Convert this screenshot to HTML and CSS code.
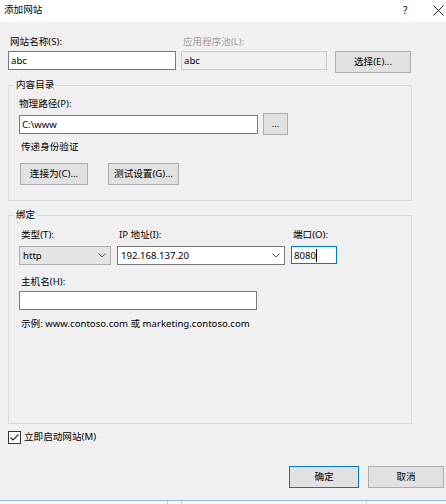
FILE: index.html
```html
<!DOCTYPE html>
<html lang="zh-CN">
<head>
<meta charset="utf-8">
<title>添加网站</title>
<link rel="stylesheet" href="styles.css">
</head>
<body>
<div class="dlg">
  <div class="titlebar">
    <span class="title">添加网站</span>
    <span class="help">?</span>
    <span class="close"><svg width="11" height="11" viewBox="0 0 11 11"><path d="M0.5 0.5 L10.5 10.5 M10.5 0.5 L0.5 10.5" stroke="#222" stroke-width="1" fill="none"/></svg></span>
  </div>
  <div class="content">
    <div class="row-top">
      <div class="field">
        <div class="lbl">网站名称(S):</div>
        <div class="input w-name">abc</div>
      </div>
      <div class="field">
        <div class="lbl dis">应用程序池(L):</div>
        <div class="input dis w-pool">abc</div>
      </div>
      <button class="btn btn-sel">选择(E)...</button>
    </div>

    <fieldset class="group g-content">
      <legend>内容目录</legend>
      <div class="lbl">物理路径(P):</div>
      <div class="row-path">
        <div class="input w-path">C:\www</div>
        <button class="btn btn-dots">...</button>
      </div>
      <div class="lbl auth">传递身份验证</div>
      <div class="row-auth">
        <button class="btn btn-conn">连接为(C)...</button>
        <button class="btn btn-test">测试设置(G)...</button>
      </div>
    </fieldset>

    <fieldset class="group g-bind">
      <legend>绑定</legend>
      <div class="row-bind">
        <div class="field">
          <div class="lbl">类型(T):</div>
          <div class="combo ro w-type"><span>http</span><svg class="chev" width="8" height="5" viewBox="0 0 8 5"><path d="M0.5 0.5 L4 4 L7.5 0.5" stroke="#555" fill="none"/></svg></div>
        </div>
        <div class="field">
          <div class="lbl">IP 地址(I):</div>
          <div class="combo w-ip"><span>192.168.137.20</span><svg class="chev" width="8" height="5" viewBox="0 0 8 5"><path d="M0.5 0.5 L4 4 L7.5 0.5" stroke="#555" fill="none"/></svg></div>
        </div>
        <div class="field">
          <div class="lbl">端口(O):</div>
          <div class="input focus w-port">8080<span class="caret"></span></div>
        </div>
      </div>
      <div class="lbl host">主机名(H):</div>
      <div class="input w-host"></div>
      <div class="lbl example">示例: www.contoso.com 或 marketing.contoso.com</div>
    </fieldset>

    <div class="check-row">
      <span class="checkbox"><svg width="13" height="13" viewBox="0 0 13 13"><rect x="0.5" y="0.5" width="12" height="12" fill="#fff" stroke="#333"/><path d="M2.5 6.5 L5 9 L10.5 3.5" stroke="#222" stroke-width="1.1" fill="none"/></svg></span>
      <span class="lbl">立即启动网站(M)</span>
    </div>

    <div class="row-actions">
      <button class="btn btn-ok">确定</button>
      <button class="btn btn-cancel">取消</button>
    </div>
  </div>
</div>
<div class="behind">
  <div class="cell c1"></div>
  <div class="cell c2"></div>
  <div class="cell c3"></div>
  <div class="cell c4"></div>
</div>
</body>
</html>
```

FILE: styles.css
```css
* { box-sizing: border-box; }

html, body {
  margin: 0;
  padding: 0;
  background: #f0f0f0;
  overflow: hidden;
}

body {
  width: 446px;
  height: 504px;
  font-family: "Noto Sans", "Noto Sans CJK SC", sans-serif;
  font-size: 9.6px;
  line-height: 16px;
  color: #000;
}

.dlg {
  height: 500px;
  background: #f0f0f0;
}

.titlebar {
  height: 22px;
  background: #fff;
  display: flex;
  align-items: center;
  padding-left: 4px;
}

.title { flex: 1; margin-top: -3px; }

.help {
  width: 30px;
  margin-top: -3px;
  font-size: 10px;
}

.close {
  display: flex;
  width: 13px;
  margin-top: -2px;
}

.content {
  padding: 12px 2px 0 8px;
}

.lbl { height: 16px; white-space: nowrap; }
.lbl.dis { color: #a0a0a0; }

.row-top {
  display: flex;
  gap: 5px;
  align-items: flex-start;
}

.field {
  display: flex;
  flex-direction: column;
  gap: 1px;
}

.lbl:first-child { padding-left: 2px; }

.input, .combo {
  height: 19px;
  background: #fff;
  border: 1px solid #7a7a7a;
  padding: 0 2px;
  line-height: 17px;
  white-space: nowrap;
}

.input.dis {
  background: #f0f0f0;
  border-color: #cccccc;
}

.w-name { width: 168px; }
.w-pool { width: 146px; }

.btn {
  font: inherit;
  line-height: 16px;
  color: #000;
  background: #e1e1e1;
  border: 1px solid #adadad;
  height: 22px;
  padding: 0;
  text-align: center;
  border-radius: 0;
  white-space: nowrap;
}

.btn-sel {
  width: 76px;
  margin-top: 17px;
  margin-left: 3px;
}

.group {
  margin: 0;
  width: 404px;
  border: 1px solid #dcdcdc;
  padding: 0 0 0 10px;
  min-width: 0;
}

.group legend {
  padding: 0 2px;
  margin-left: -5px;
  line-height: 16px;
}

.g-content {
  margin-top: 4px;
  padding-top: 3px;
  padding-bottom: 15px;
}

.row-path {
  display: flex;
  align-items: center;
  gap: 5px;
  margin-top: 1px;
}

.w-path { width: 239px; }
.btn-dots { width: 25px; }

.lbl.auth { margin-top: 4px; padding-left: 2px; }

.row-auth {
  display: flex;
  gap: 20px;
  margin-top: 8px;
  padding-left: 1px;
}

.btn-conn { width: 68px; }
.btn-test { width: 71px; }

.g-bind {
  margin-top: 6px;
  padding-top: 4px;
  padding-bottom: 91px;
}

.row-bind {
  display: flex;
  gap: 6px;
}

.row-bind .field { gap: 3px; }

.combo {
  display: flex;
  align-items: center;
  justify-content: space-between;
  padding: 0 4px 0 3px;
}

.combo.ro {
  background: #e5e5e5;
  border-color: #adadad;
}

.chev { margin-bottom: 1px; }

.w-type { width: 92px; }
.w-ip { width: 168px; }

.w-port { width: 46px; height: 18px; }

.input.focus { border-color: #0078d7; }

.caret {
  display: inline-block;
  width: 1px;
  height: 13px;
  background: #000;
  vertical-align: -3px;
}

.lbl.host { margin-top: 9px; padding-left: 2px; }
.w-host { width: 238px; margin-top: 1px; }
.lbl.example { margin-top: 6px; padding-left: 2px; }

.check-row {
  display: flex;
  align-items: center;
  gap: 3px;
  margin-top: 5px;
  height: 16px;
}

.checkbox { display: flex; }

.row-actions {
  display: flex;
  justify-content: flex-end;
  gap: 9px;
  margin-top: 21px;
}

.btn-ok {
  width: 70px;
  border-color: #0078d7;
}

.btn-cancel { width: 76px; }

.behind {
  height: 4px;
  background: #fff;
  border-top: 1px solid #8cc0ea;
  display: flex;
}

.cell { height: 3px; border-right: 1px solid #c8c8c8; }
.c1 { width: 168px; }
.c2 { width: 14px; }
.c3 { width: 185px; }
.c4 { flex: 1; border-right: none; }
```
